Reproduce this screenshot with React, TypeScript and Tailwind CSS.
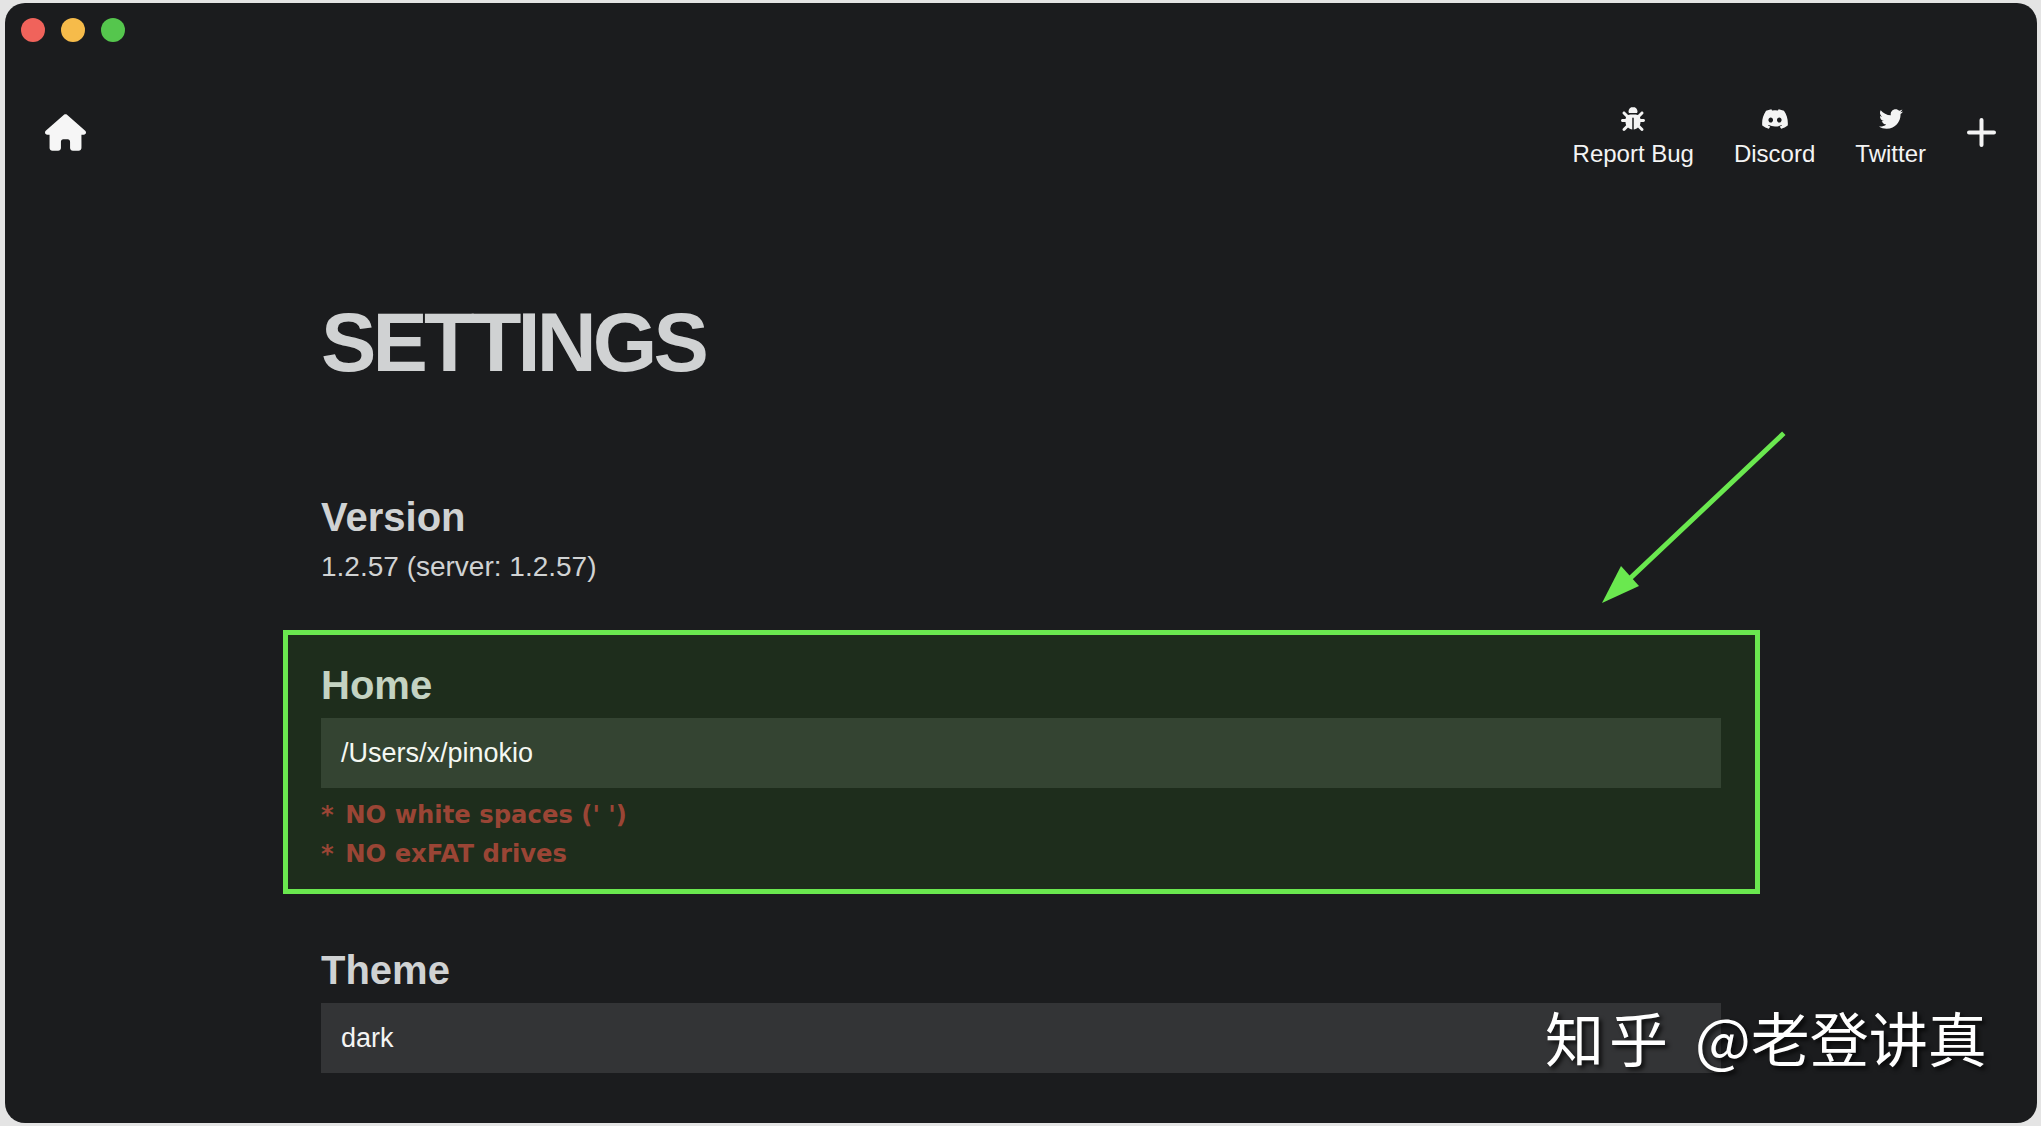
import { FaBug, FaDiscord, FaHouse, FaTwitter } from "react-icons/fa6";
import type { ReactNode } from "react";

const sans = "font-['Liberation_Sans',Arial,sans-serif]";

function NavLink({ icon, label }: { icon: ReactNode; label: string }) {
  return (
    <a className="flex flex-col items-center gap-[7px] text-[24px] leading-[30px] text-[#f4f4f4]">
      <span className="flex h-[26px] items-center">{icon}</span>
      {label}
    </a>
  );
}

function Field({ label, value, tone }: { label: string; value: string; tone: "green" | "plain" }) {
  return (
    <>
      <h2 className={`text-[40px] leading-[46px] font-bold ${tone === "green" ? "text-[#c4d3c2]" : "text-[#d0d2d3]"}`}>
        {label}
      </h2>
      <div
        className={`mt-[10px] flex h-[70px] items-center px-[20px] text-[27px] ${
          tone === "green" ? "bg-[#344432] text-[#f4f8f2]" : "bg-[#333436] text-[#f4f4f4]"
        }`}
      >
        {value}
      </div>
    </>
  );
}

export default function App() {
  return (
    <div className="h-[1126px] w-[2041px] overflow-hidden bg-[#e4e4e4] pt-[3px] pr-[4px] pb-[3px] pl-[5px]">
      <div className={`relative h-full overflow-hidden rounded-[20px] bg-[#1b1c1e] ${sans}`}>
        {/* traffic lights */}
        <div className="flex gap-[16px] pt-[15px] pl-[16px]">
          <span className="size-[24px] rounded-full bg-[#f0635b]" />
          <span className="size-[24px] rounded-full bg-[#f6bb4a]" />
          <span className="size-[24px] rounded-full bg-[#55c64d]" />
        </div>

        <header className="mt-[64px] flex items-center justify-between pr-[41px] pl-[40px]">
          <FaHouse className="mb-[10px] text-[#f6f6f6]" size={41} />
          <nav className="flex items-center">
            <NavLink icon={<FaBug size={24} />} label="Report Bug" />
            <div className="ml-[40px]">
              <NavLink icon={<FaDiscord size={28} />} label="Discord" />
            </div>
            <div className="ml-[40px]">
              <NavLink icon={<FaTwitter size={24} />} label="Twitter" />
            </div>
            <svg
              className="mb-[10px] ml-[41px]"
              width="29"
              height="29"
              viewBox="0 0 29 29"
              stroke="#f4f4f4"
              strokeWidth="4"
              strokeLinecap="round"
            >
              <path d="M14.5 2v25M2 14.5h25" />
            </svg>
          </nav>
        </header>

        <main className="mt-[126px] ml-[316px] w-[1400px]">
          <h1 className="text-[83px] leading-[96px] font-bold tracking-[-3.9px] text-[#d0d2d3]">SETTINGS</h1>

          <h2 className="mt-[103px] text-[40px] leading-[46px] font-bold text-[#d0d2d3]">Version</h2>
          <p className="mt-[9px] text-[28px] leading-[36px] text-[#d0d2d3]">1.2.57 (server: 1.2.57)</p>

          <section className="mt-[45px] -mr-[39px] -ml-[38px] h-[264px] border-[5px] border-[#6ae84f] bg-[#1e2d1c] pt-[27px] pr-[34px] pl-[33px]">
            <Field label="Home" value="/Users/x/pinokio" tone="green" />
            <div className="mt-[7px] font-['DejaVu_Sans',Verdana,sans-serif] text-[24.3px] leading-[39px] font-bold text-[#9a4535]">
              <p>
                <span className="mr-[3px]">*</span> NO white spaces (' ')
              </p>
              <p>
                <span className="mr-[3px]">*</span> NO exFAT drives
              </p>
            </div>
          </section>

          <div className="mt-[53px]">
            <Field label="Theme" value="dark" tone="plain" />
          </div>
        </main>

        {/* annotation arrow */}
        <svg className="absolute top-[425px] left-[1585px]" width="205" height="185" viewBox="0 0 205 185" fill="#6ae84f">
          <path d="M192 7 33 157" stroke="#6ae84f" strokeWidth="5" strokeLinecap="square" />
          <path d="M12 175 31 138 49 158Z" />
        </svg>

        {/* watermark */}
        <div className="absolute top-[992px] left-[1540px] flex font-['Noto_Sans_CJK_SC',sans-serif] text-[59px] leading-[84px] whitespace-nowrap text-white [text-shadow:3px_3px_4px_rgba(0,0,0,0.75)]">
          <span className="tracking-[5px]">知乎</span>
          <span className="ml-[22px]">@老登讲真</span>
        </div>
      </div>
    </div>
  );
}
